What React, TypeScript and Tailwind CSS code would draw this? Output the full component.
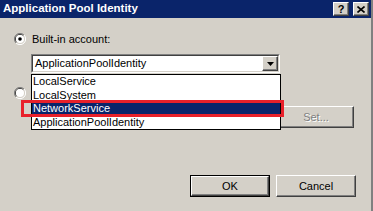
import React from 'react';

const font = { fontFamily: '"Liberation Sans", Arial, sans-serif' };

function Radio({ checked }: { checked?: boolean }) {
  return (
    <svg width="12" height="12" viewBox="0 0 12 12" className="shrink-0">
      <path d="M10 2 A5.5 5.5 0 0 0 2 10" stroke="#808080" strokeWidth="1" fill="none" />
      <path d="M9.3 2.7 A4.5 4.5 0 0 0 2.7 9.3" stroke="#404040" strokeWidth="1" fill="none" />
      <path d="M2 10 A5.5 5.5 0 0 0 10 2" stroke="#ffffff" strokeWidth="1" fill="none" />
      <circle cx="6" cy="6" r="4" fill="#ffffff" />
      {checked && <circle cx="6" cy="6" r="1.8" fill="#000000" />}
    </svg>
  );
}

function Raised({ children, className = '' }: any) {
  return (
    <div
      className={`flex items-center justify-center bg-[#d4d0c8] border border-t-white border-l-white border-r-[#404040] border-b-[#404040] shadow-[inset_-1px_-1px_0_#808080] ${className}`}
    >
      {children}
    </div>
  );
}

function Button({ label, isDefault, disabled, className = '' }: any) {
  const inner = (
    <Raised className="w-full h-full">
      <span
        className={
          disabled
            ? 'text-[11px] text-[#808080] [text-shadow:1px_1px_0_#ffffff]'
            : 'text-[11px] text-black'
        }
      >
        {label}
      </span>
    </Raised>
  );
  return isDefault ? (
    <div className={`border border-black ${className}`}>{inner}</div>
  ) : (
    <div className={className}>{inner}</div>
  );
}

export default function App() {
  const items = ['LocalService', 'LocalSystem', 'NetworkService', 'ApplicationPoolIdentity'];

  return (
    <div
      style={font}
      className="relative w-[373px] h-[211px] overflow-hidden bg-[#d4d0c8] flex flex-col border-r-2 border-r-[#808080] select-none"
    >
      {/* title bar */}
      <div className="h-[18px] bg-[#0a246a] flex items-center pl-[3px] pr-[2px] shrink-0">
        <span className="text-white font-bold text-[11.5px] leading-none flex-1">
          Application Pool Identity
        </span>
        <Raised className="w-[16px] h-[14px] mr-[4px]">
          <span className="text-[11px] font-bold text-black leading-none">?</span>
        </Raised>
        <Raised className="w-[16px] h-[14px]">
          <svg width="8" height="7" viewBox="0 0 8 7">
            <path d="M0.5 0.5 L7.5 6.5 M7.5 0.5 L0.5 6.5" stroke="#000" strokeWidth="1.6" />
          </svg>
        </Raised>
      </div>

      {/* body */}
      <div className="flex-1 flex flex-col">
        <div className="flex items-center gap-[6px] pl-[14px] mt-[15px] h-[12px]">
          <Radio checked />
          <span className="text-[11px] text-black leading-none">Built-in account:</span>
        </div>

        <div className="ml-[31px] mt-[9px] w-[249px] h-[19px] flex border border-t-[#808080] border-l-[#808080] border-r-white border-b-white">
          <div className="flex-1 flex border border-t-[#404040] border-l-[#404040] border-r-[#d4d0c8] border-b-[#d4d0c8] bg-white">
            <span className="flex-1 text-[11px] text-black leading-[15px] pl-[2px]">
              ApplicationPoolIdentity
            </span>
            <Raised className="w-[16px] h-full">
              <svg width="7" height="4" viewBox="0 0 7 4">
                <path d="M0 0 H7 L3.5 4 Z" fill="#000" />
              </svg>
            </Raised>
          </div>
        </div>

        {/* custom account radio (its label is covered by the open list) */}
        <div className="flex items-center pl-[14px] mt-[14px] h-[12px]">
          <Radio />
        </div>

        <div className="flex items-center justify-end pr-[17px] mt-[7px]">
          <Button label="Set..." disabled className="w-[76px] h-[22px]" />
        </div>

        <div className="flex justify-end gap-[6px] pr-[15px] mt-auto mb-[14px]">
          <Button label="OK" isDefault className="w-[80px] h-[22px]" />
          <Button label="Cancel" className="w-[80px] h-[22px]" />
        </div>
      </div>

      {/* open dropdown list */}
      <div className="absolute left-[31px] top-[74px] w-[250px] h-[56px] bg-white border border-black flex flex-col">
        {items.map((it) => (
          <div
            key={it}
            className={
              it === 'NetworkService'
                ? 'h-[13.5px] bg-[#0a246a] text-white text-[11px] leading-[13.5px] pl-[1px]'
                : 'h-[13.5px] text-black text-[11px] leading-[13.5px] pl-[1px]'
            }
          >
            {it}
          </div>
        ))}
      </div>

      {/* red annotation */}
      <div className="absolute left-[21px] top-[100px] w-[263px] h-[17px] border-[3px] border-[#e8202a]" />
    </div>
  );
}
